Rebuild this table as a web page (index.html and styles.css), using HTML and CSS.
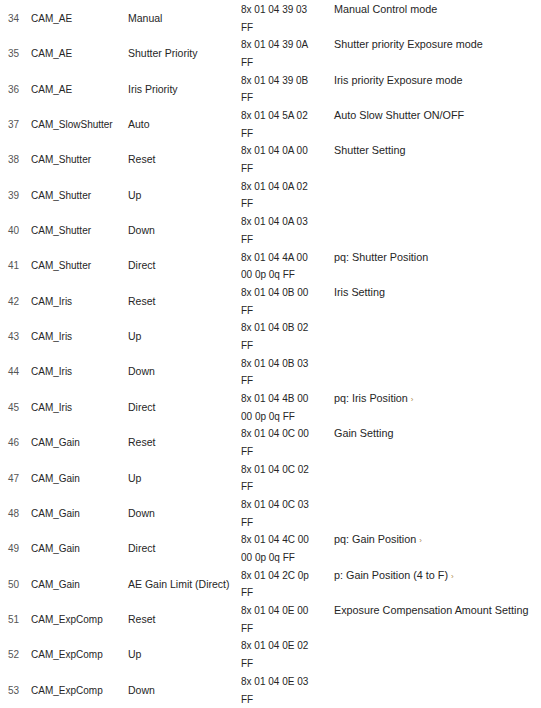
FILE: index.html
```html
<!DOCTYPE html>
<html>
<head>
<meta charset="utf-8">
<link rel="stylesheet" href="styles.css">
</head>
<body>
<div class="table">
  <div class="row"><div class="num">34</div><div class="name">CAM_AE</div><div class="mode">Manual</div><div class="cmd">8x 01 04 39 03<br>FF</div><div class="desc">Manual Control mode</div></div>
  <div class="row"><div class="num">35</div><div class="name">CAM_AE</div><div class="mode">Shutter Priority</div><div class="cmd">8x 01 04 39 0A<br>FF</div><div class="desc">Shutter priority Exposure mode</div></div>
  <div class="row"><div class="num">36</div><div class="name">CAM_AE</div><div class="mode">Iris Priority</div><div class="cmd">8x 01 04 39 0B<br>FF</div><div class="desc">Iris priority Exposure mode</div></div>
  <div class="row"><div class="num">37</div><div class="name">CAM_SlowShutter</div><div class="mode">Auto</div><div class="cmd">8x 01 04 5A 02<br>FF</div><div class="desc">Auto Slow Shutter ON/OFF</div></div>
  <div class="row"><div class="num">38</div><div class="name">CAM_Shutter</div><div class="mode">Reset</div><div class="cmd">8x 01 04 0A 00<br>FF</div><div class="desc">Shutter Setting</div></div>
  <div class="row"><div class="num">39</div><div class="name">CAM_Shutter</div><div class="mode">Up</div><div class="cmd">8x 01 04 0A 02<br>FF</div><div class="desc"></div></div>
  <div class="row"><div class="num">40</div><div class="name">CAM_Shutter</div><div class="mode">Down</div><div class="cmd">8x 01 04 0A 03<br>FF</div><div class="desc"></div></div>
  <div class="row"><div class="num">41</div><div class="name">CAM_Shutter</div><div class="mode">Direct</div><div class="cmd">8x 01 04 4A 00<br>00 0p 0q FF</div><div class="desc">pq: Shutter Position</div></div>
  <div class="row"><div class="num">42</div><div class="name">CAM_Iris</div><div class="mode">Reset</div><div class="cmd">8x 01 04 0B 00<br>FF</div><div class="desc">Iris Setting</div></div>
  <div class="row"><div class="num">43</div><div class="name">CAM_Iris</div><div class="mode">Up</div><div class="cmd">8x 01 04 0B 02<br>FF</div><div class="desc"></div></div>
  <div class="row"><div class="num">44</div><div class="name">CAM_Iris</div><div class="mode">Down</div><div class="cmd">8x 01 04 0B 03<br>FF</div><div class="desc"></div></div>
  <div class="row"><div class="num">45</div><div class="name">CAM_Iris</div><div class="mode">Direct</div><div class="cmd">8x 01 04 4B 00<br>00 0p 0q FF</div><div class="desc">pq: Iris Position <span class="mark">›</span></div></div>
  <div class="row"><div class="num">46</div><div class="name">CAM_Gain</div><div class="mode">Reset</div><div class="cmd">8x 01 04 0C 00<br>FF</div><div class="desc">Gain Setting</div></div>
  <div class="row"><div class="num">47</div><div class="name">CAM_Gain</div><div class="mode">Up</div><div class="cmd">8x 01 04 0C 02<br>FF</div><div class="desc"></div></div>
  <div class="row"><div class="num">48</div><div class="name">CAM_Gain</div><div class="mode">Down</div><div class="cmd">8x 01 04 0C 03<br>FF</div><div class="desc"></div></div>
  <div class="row"><div class="num">49</div><div class="name">CAM_Gain</div><div class="mode">Direct</div><div class="cmd">8x 01 04 4C 00<br>00 0p 0q FF</div><div class="desc">pq: Gain Position <span class="mark">›</span></div></div>
  <div class="row"><div class="num">50</div><div class="name">CAM_Gain</div><div class="mode">AE Gain Limit (Direct)</div><div class="cmd">8x 01 04 2C 0p<br>FF</div><div class="desc">p: Gain Position (4 to F) <span class="mark">›</span></div></div>
  <div class="row"><div class="num">51</div><div class="name">CAM_ExpComp</div><div class="mode">Reset</div><div class="cmd">8x 01 04 0E 00<br>FF</div><div class="desc">Exposure Compensation Amount Setting</div></div>
  <div class="row"><div class="num">52</div><div class="name">CAM_ExpComp</div><div class="mode">Up</div><div class="cmd">8x 01 04 0E 02<br>FF</div><div class="desc"></div></div>
  <div class="row"><div class="num">53</div><div class="name">CAM_ExpComp</div><div class="mode">Down</div><div class="cmd">8x 01 04 0E 03<br>FF</div><div class="desc"></div></div>
</div>
</body>
</html>
```
FILE: styles.css
```css
html, body {
  margin: 0;
  padding: 0;
  background: #ffffff;
}
body {
  font-family: "Liberation Sans", Arial, sans-serif;
  font-size: 10px;
  color: #262626;
  width: 541px;
  height: 708px;
  overflow: hidden;
}
.table {
  display: flex;
  flex-direction: column;
  padding: 1px 0 0 8px;
}
.row {
  display: grid;
  grid-template-columns: 23px 97px 113px 93px 1fr;
  height: 35.37px;
  line-height: 17.68px;
}
.num, .name, .mode {
  align-self: center;
  white-space: nowrap;
}
.num {
  color: #555555;
}
.mode {
  font-size: 10.5px;
}
.cmd, .desc {
  align-self: start;
  white-space: nowrap;
}
.desc {
  font-size: 10.8px;
}
.mark {
  font-size: 8px;
  color: #b08a50;
}
```
